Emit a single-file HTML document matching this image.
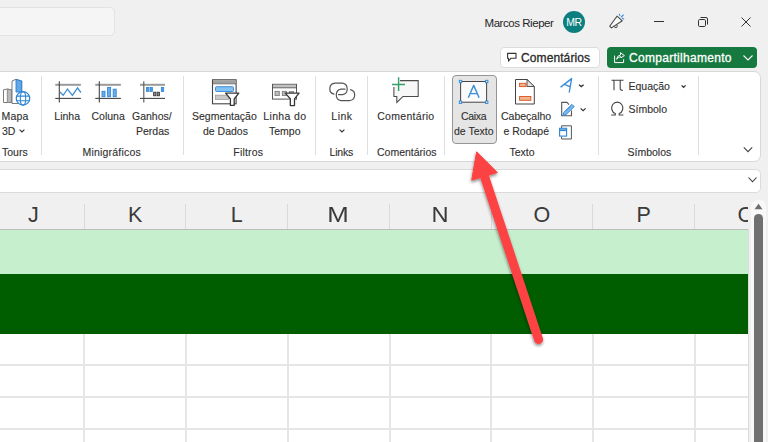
<!DOCTYPE html>
<html><head><meta charset="utf-8">
<style>
*{margin:0;padding:0;box-sizing:border-box}
html,body{width:768px;height:442px;overflow:hidden;background:#f0f0f0;font-family:"Liberation Sans",sans-serif;color:#262626;position:relative}
.a{position:absolute}
.t{position:absolute;white-space:nowrap}
.r{-webkit-text-stroke:0.12px currentColor}
svg{position:absolute;overflow:visible}
</style></head><body>
<div class="a" style="left:-10px;top:7px;width:125px;height:29px;background:#f5f5f5;border:1px solid #e3e3e3;border-radius:5px"></div>
<div class="t" style="left:484.50px;top:16.62px;font-size:11.5px;line-height:13.8px;color:#262626;letter-spacing:-0.45px">Marcos Rieper</div>
<div class="a" style="left:562.6px;top:10.75px;width:22px;height:22px;border-radius:50%;background:#0b7f80"></div>
<div class="t" style="left:558.90px;width:30px;text-align:center;top:15.66px;font-size:10.5px;line-height:12.6px;color:#ffffff;letter-spacing:-0.4px">MR</div>
<svg style="left:0;top:0" width="768" height="442" viewBox="0 0 768 442">
<path d="M617 16.2 L622.3 20.8 L611.4 27.9 L609.7 26.2 Z" fill="#fafafa" stroke="#454545" stroke-width="1.1" stroke-linejoin="round"/>
<path d="M613.6 25.9 Q614.5 28.3 616.8 27.4 Q617.4 26.4 617 25" fill="none" stroke="#454545" stroke-width="1"/>
<path d="M619.4 14.3 L619.9 15.6 M621.3 17 L623.3 15 M622.3 18.3 L623.8 18.9" stroke="#3b8fdb" stroke-width="1.1" stroke-linecap="round"/>
</svg>
<div class="a" style="left:654px;top:21px;width:10px;height:1px;background:#333"></div>
<svg style="left:697px;top:16px" width="12" height="12" viewBox="0 0 12 12">
<rect x="1.5" y="3.5" width="7" height="7" rx="1.2" fill="none" stroke="#333" stroke-width="1"/>
<path d="M3.5 1.5 H9 A1.5 1.5 0 0 1 10.5 3 V8.5" fill="none" stroke="#333" stroke-width="1"/>
</svg>
<svg style="left:741px;top:17px" width="10" height="10" viewBox="0 0 10 10">
<path d="M0.5 0.5 L9.5 9.5 M9.5 0.5 L0.5 9.5" stroke="#333" stroke-width="1"/>
</svg>
<div class="a" style="left:499.5px;top:46.5px;width:100px;height:21px;background:#fff;border:1px solid #dcdcdc;border-radius:4px"></div>
<svg style="left:0;top:0" width="768" height="442" viewBox="0 0 768 442">
<path d="M507.6 53.4 H516 V58.2 H511 L508.5 61.2 V58.2 H507.6 Z" fill="none" stroke="#333" stroke-width="1.1" stroke-linejoin="round"/>
</svg>
<div class="t" style="left:521.00px;top:50.84px;font-size:12px;line-height:14.4px;color:#2a2a2a;-webkit-text-stroke:0.3px #2a2a2a;letter-spacing:0.1px">Comentários</div>
<div class="a" style="left:607px;top:46.5px;width:150px;height:21.5px;background:#16793f;border-radius:4px"></div>
<svg style="left:0;top:0" width="768" height="442" viewBox="0 0 768 442">
<path d="M614.6 55.6 V62.6 H623.6 V59.2" fill="none" stroke="#fff" stroke-width="1"/>
<path d="M616.6 59.2 Q617.2 55.6 620.6 54.9 L620.4 52.6 L624.4 55.6 L621 57.8 L620.9 56.6 Q618.2 57 616.6 59.2 Z" fill="none" stroke="#fff" stroke-width="1" stroke-linejoin="round"/>
</svg>
<div class="t" style="left:629.00px;top:50.84px;font-size:12px;line-height:14.4px;color:#ffffff;-webkit-text-stroke:0.3px #ffffff;letter-spacing:0.3px">Compartilhamento</div>
<svg style="left:743px;top:55px" width="10" height="6" viewBox="0 0 10 6">
<path d="M0.5 0.5 L5 5 L9.5 0.5" fill="none" stroke="#fff" stroke-width="1.1"/>
</svg>
<div class="a" style="left:-12px;top:71px;width:772.5px;height:90.5px;background:#fff;border:1px solid #d8d8d8;border-radius:7px"></div>
<div class="a" style="left:41.0px;top:76px;width:1px;height:79px;background:#dedede"></div>
<div class="a" style="left:182.5px;top:76px;width:1px;height:79px;background:#dedede"></div>
<div class="a" style="left:314.5px;top:76px;width:1px;height:79px;background:#dedede"></div>
<div class="a" style="left:367.0px;top:76px;width:1px;height:79px;background:#dedede"></div>
<div class="a" style="left:443.5px;top:76px;width:1px;height:79px;background:#dedede"></div>
<div class="a" style="left:598.0px;top:76px;width:1px;height:79px;background:#dedede"></div>
<div class="a" style="left:698.0px;top:76px;width:1px;height:79px;background:#dedede"></div>
<div class="t r" style="left:1.50px;top:110.06px;font-size:10.5px;line-height:12.6px;color:#303030;letter-spacing:0.2px">Mapa</div>
<div class="t r" style="left:2.00px;top:124.76px;font-size:10.5px;line-height:12.6px;color:#303030;">3D</div>
<svg style="left:19px;top:129px" width="6" height="4" viewBox="0 0 6 4"><path d="M0.6 0.6 L3 2.9 L5.4 0.6" fill="none" stroke="#333" stroke-width="1.2"/></svg>
<div class="t r" style="left:2.00px;top:146.06px;font-size:10.5px;line-height:12.6px;color:#303030;">Tours</div>
<div class="t r" style="left:54.30px;top:110.06px;font-size:10.5px;line-height:12.6px;color:#303030;">Linha</div>
<div class="t r" style="left:91.50px;top:110.06px;font-size:10.5px;line-height:12.6px;color:#303030;">Coluna</div>
<div class="t r" style="left:132.00px;top:110.06px;font-size:10.5px;line-height:12.6px;color:#303030;">Ganhos/</div>
<div class="t r" style="left:136.00px;top:124.76px;font-size:10.5px;line-height:12.6px;color:#303030;">Perdas</div>
<div class="t r" style="left:82.50px;top:146.06px;font-size:10.5px;line-height:12.6px;color:#303030;letter-spacing:0.2px">Minigráficos</div>
<div class="t r" style="left:192.00px;top:110.06px;font-size:10.5px;line-height:12.6px;color:#303030;">Segmentação</div>
<div class="t r" style="left:203.00px;top:124.76px;font-size:10.5px;line-height:12.6px;color:#303030;">de Dados</div>
<div class="t r" style="left:263.30px;top:110.06px;font-size:10.5px;line-height:12.6px;color:#303030;letter-spacing:0.35px">Linha do</div>
<div class="t r" style="left:269.00px;top:124.76px;font-size:10.5px;line-height:12.6px;color:#303030;">Tempo</div>
<div class="t r" style="left:233.30px;top:146.06px;font-size:10.5px;line-height:12.6px;color:#303030;letter-spacing:0.2px">Filtros</div>
<div class="t r" style="left:331.30px;top:110.06px;font-size:10.5px;line-height:12.6px;color:#303030;letter-spacing:0.5px">Link</div>
<svg style="left:338.5px;top:129px" width="6" height="4" viewBox="0 0 6 4"><path d="M0.6 0.6 L3 2.9 L5.4 0.6" fill="none" stroke="#333" stroke-width="1.2"/></svg>
<div class="t r" style="left:329.50px;top:146.06px;font-size:10.5px;line-height:12.6px;color:#303030;letter-spacing:-0.2px">Links</div>
<div class="t r" style="left:377.20px;top:110.06px;font-size:10.5px;line-height:12.6px;color:#303030;letter-spacing:0.3px">Comentário</div>
<div class="t r" style="left:377.00px;top:146.06px;font-size:10.5px;line-height:12.6px;color:#303030;">Comentários</div>
<div class="a" style="left:451.5px;top:74.5px;width:45px;height:69px;background:#e5e5e5;border:1px solid #959595;border-radius:4px"></div>
<div class="t r" style="left:461.00px;top:110.06px;font-size:10.5px;line-height:12.6px;color:#303030;letter-spacing:-0.3px">Caixa</div>
<div class="t r" style="left:454.00px;top:124.76px;font-size:10.5px;line-height:12.6px;color:#303030;">de Texto</div>
<div class="t r" style="left:501.00px;top:110.06px;font-size:10.5px;line-height:12.6px;color:#303030;">Cabeçalho</div>
<div class="t r" style="left:503.50px;top:124.76px;font-size:10.5px;line-height:12.6px;color:#303030;">e Rodapé</div>
<div class="t r" style="left:509.50px;top:146.06px;font-size:10.5px;line-height:12.6px;color:#303030;">Texto</div>
<div class="t r" style="left:628.50px;top:79.76px;font-size:10.5px;line-height:12.6px;color:#303030;">Equação</div>
<div class="t r" style="left:628.50px;top:102.76px;font-size:10.5px;line-height:12.6px;color:#303030;">Símbolo</div>
<div class="t r" style="left:627.50px;top:146.06px;font-size:10.5px;line-height:12.6px;color:#303030;">Símbolos</div>
<div class="a" style="left:-12px;top:169px;width:773px;height:24px;background:#fff;border:1px solid #dbdbdb;border-radius:5px"></div>
<svg style="left:747.5px;top:176.5px" width="10" height="6" viewBox="0 0 10 6"><path d="M0.5 0.5 L4.5 4.8 L8.5 0.5" fill="none" stroke="#333" stroke-width="1.1"/></svg>
<div class="a" style="left:84px;top:204px;width:1px;height:25px;background:#dadada"></div>
<div class="a" style="left:185px;top:204px;width:1px;height:25px;background:#dadada"></div>
<div class="a" style="left:287px;top:204px;width:1px;height:25px;background:#dadada"></div>
<div class="a" style="left:389px;top:204px;width:1px;height:25px;background:#dadada"></div>
<div class="a" style="left:491px;top:204px;width:1px;height:25px;background:#dadada"></div>
<div class="a" style="left:592px;top:204px;width:1px;height:25px;background:#dadada"></div>
<div class="a" style="left:694px;top:204px;width:1px;height:25px;background:#dadada"></div>
<div class="a" style="left:0;top:229px;width:748px;height:1px;background:#bdbdbd"></div>
<div class="a" style="left:748px;top:229px;width:1px;height:213px;background:#dcdcdc"></div>
<div class="a" style="left:0;top:230px;width:748px;height:44px;background:#c6efce"></div>
<div class="a" style="left:0;top:274px;width:748px;height:60px;background:#005e00"></div>
<div class="a" style="left:0;top:334px;width:748px;height:108px;background:#fff"></div>
<div class="a" style="left:0;top:364px;width:748px;height:2px;background:#e6e6e6"></div>
<div class="a" style="left:0;top:396px;width:748px;height:2px;background:#e6e6e6"></div>
<div class="a" style="left:0;top:428px;width:748px;height:2px;background:#e6e6e6"></div>
<div class="a" style="left:83px;top:334px;width:2px;height:108px;background:#e6e6e6"></div>
<div class="a" style="left:185px;top:334px;width:2px;height:108px;background:#e6e6e6"></div>
<div class="a" style="left:287px;top:334px;width:2px;height:108px;background:#e6e6e6"></div>
<div class="a" style="left:389px;top:334px;width:2px;height:108px;background:#e6e6e6"></div>
<div class="a" style="left:490px;top:334px;width:2px;height:108px;background:#e6e6e6"></div>
<div class="a" style="left:592px;top:334px;width:2px;height:108px;background:#e6e6e6"></div>
<div class="a" style="left:694px;top:334px;width:2px;height:108px;background:#e6e6e6"></div>
<div class="a" style="left:0;top:195px;width:748px;height:34px;overflow:hidden">
<div class="t" style="left:13.35px;width:40px;text-align:center;top:8.25px;font-size:21.5px;line-height:25.8px;color:#3a3a3a;transform:scaleX(1.0)">J</div>
<div class="t" style="left:115.05px;width:40px;text-align:center;top:8.25px;font-size:21.5px;line-height:25.8px;color:#3a3a3a;transform:scaleX(1.0)">K</div>
<div class="t" style="left:216.75px;width:40px;text-align:center;top:8.25px;font-size:21.5px;line-height:25.8px;color:#3a3a3a;transform:scaleX(1.0)">L</div>
<div class="t" style="left:318.45px;width:40px;text-align:center;top:8.25px;font-size:21.5px;line-height:25.8px;color:#3a3a3a;transform:scaleX(1.2)">M</div>
<div class="t" style="left:420.15px;width:40px;text-align:center;top:8.25px;font-size:21.5px;line-height:25.8px;color:#3a3a3a;transform:scaleX(1.1)">N</div>
<div class="t" style="left:521.85px;width:40px;text-align:center;top:8.25px;font-size:21.5px;line-height:25.8px;color:#3a3a3a;transform:scaleX(1.0)">O</div>
<div class="t" style="left:623.55px;width:40px;text-align:center;top:8.25px;font-size:21.5px;line-height:25.8px;color:#3a3a3a;transform:scaleX(1.0)">P</div>
<div class="t" style="left:725.25px;width:40px;text-align:center;top:8.25px;font-size:21.5px;line-height:25.8px;color:#3a3a3a;transform:scaleX(1.0)">C</div>
</div>
<div class="a" style="left:750.8px;top:199.5px;width:15.4px;height:250px;background:#f8f8f8;border-radius:7px"></div>
<svg style="left:754px;top:203px" width="9" height="7" viewBox="0 0 9 7"><path d="M0.5 6.2 L4.5 0.8 L8.5 6.2 Z" fill="#6e6e6e"/></svg>
<div class="a" style="left:754.3px;top:214px;width:8.5px;height:240px;background:#707070;border-radius:4.25px"></div>
<svg style="left:0;top:0" width="768" height="442" viewBox="0 0 768 442">
<!-- Mapa 3D -->
<g stroke-linejoin="round">
<path d="M3.5 89.8 L7.3 89 L11.6 89.8 V102.5 H3.5 Z" fill="#fff" stroke="#7a7a7a" stroke-width="1"/>
<path d="M7.3 89.2 L11.6 89.8 V102.5 H7.3 Z" fill="#b9b9b9" stroke="#7a7a7a" stroke-width="0.8"/>
<path d="M12 81 L16 79.3 L21.7 81 V103.5 H12 Z" fill="#fff" stroke="#7a7a7a" stroke-width="1"/>
<path d="M16 79.5 L21.7 81 V92 H16 Z" fill="#62a8e6" stroke="#2a7fd2" stroke-width="0.9"/>
<circle cx="23" cy="98.4" r="6.7" fill="#fff" stroke="#2f86d6" stroke-width="1.3"/>
<ellipse cx="23" cy="98.4" rx="2.7" ry="6.7" fill="none" stroke="#2f86d6" stroke-width="1.1"/>
<path d="M16.7 96.1 H29.3 M16.7 100.7 H29.3" stroke="#2f86d6" stroke-width="1.1"/>
</g>
<!-- Linha -->
<path d="M55.3 84.8 H80.9" stroke="#9a9a9a" stroke-width="2"/>
<path d="M55.3 98.4 H80.9" stroke="#444" stroke-width="1.1"/>
<path d="M59.3 81.3 V102.6" stroke="#444" stroke-width="1.1"/>
<path d="M60 92 L63.2 95.3 L67.5 89 L72.4 95.3 L77.5 87.8 L80.9 92.5" fill="none" stroke="#3d8fd8" stroke-width="1.3" stroke-linejoin="miter"/>
<!-- Coluna -->
<path d="M95.3 84.8 H120.9" stroke="#9a9a9a" stroke-width="2"/>
<path d="M95.3 98.4 H120.9" stroke="#444" stroke-width="1.1"/>
<path d="M99.3 81.3 V102.6" stroke="#444" stroke-width="1.1"/>
<g fill="#6aaee8" stroke="#2f86d6" stroke-width="0.9">
<rect x="102" y="91.3" width="3" height="5.4"/>
<rect x="107.6" y="87.4" width="3" height="9.3"/>
<rect x="113.2" y="89.2" width="3" height="7.5"/>
</g>
<!-- Ganhos -->
<path d="M140 84.8 H165" stroke="#9a9a9a" stroke-width="2"/>
<path d="M140 98.4 H165" stroke="#444" stroke-width="1.1"/>
<path d="M143.8 81.2 V102.4" stroke="#555" stroke-width="1.1"/>
<g fill="#4c9be0" stroke="#2f86d6" stroke-width="0.8">
<rect x="146.4" y="87.4" width="2.4" height="4"/>
<rect x="150" y="87.4" width="2.4" height="4"/>
<rect x="161.3" y="87.4" width="2.4" height="4"/>
</g>
<g fill="#888" stroke="#333" stroke-width="0.8">
<rect x="153.6" y="92.2" width="2.4" height="3.6"/>
<rect x="157.2" y="92.2" width="2.4" height="3.6"/>
</g>
<!-- Segmentacao -->
<rect x="212.5" y="79.8" width="23.6" height="24" fill="#fff" stroke="#444" stroke-width="1.1"/>
<rect x="213" y="80.3" width="22.6" height="3.2" fill="#a0a0a0"/>
<path d="M212.5 83.8 H236.1" stroke="#555" stroke-width="0.8"/>
<rect x="215.5" y="86.7" width="18" height="4.8" rx="1" fill="#84c2f2" stroke="#2f86d6" stroke-width="0.9"/>
<rect x="215.5" y="95.2" width="13" height="4.2" fill="#c9c9c9" stroke="#9a9a9a" stroke-width="0.8"/>
<path d="M225.6 93.2 H238.8 L234.2 99 V105.4 H230.4 V99 Z" fill="#fff" stroke="#383838" stroke-width="1.3" stroke-linejoin="round"/>
<!-- Linha do tempo -->
<rect x="272.5" y="84.3" width="24" height="14.8" fill="#fff" stroke="#555" stroke-width="1"/>
<rect x="273" y="84.8" width="23" height="2.8" fill="#c2c2c2"/>
<path d="M272.5 87.8 H296.5" stroke="#555" stroke-width="0.9"/>
<rect x="275" y="91.3" width="4.3" height="4.3" fill="#bdbdbd" stroke="#777" stroke-width="0.8"/>
<rect x="282.3" y="91.3" width="4.3" height="4.3" fill="#bdbdbd" stroke="#777" stroke-width="0.8"/>
<rect x="289.2" y="91.3" width="4.5" height="1.6" fill="#bdbdbd" stroke="#777" stroke-width="0.6"/>
<path d="M285.2 93.1 H299.1 L294.5 98.8 V105.6 H290.3 V98.8 Z" fill="#fff" stroke="#383838" stroke-width="1.3" stroke-linejoin="round"/>
<!-- Link -->
<g fill="none" stroke="#555" stroke-width="1.2" stroke-linecap="round">
<path d="M334 94.2 A5.6 5.6 0 0 1 335 83.2 H342.5 A5.8 5.8 0 0 1 342.5 94.6 H338.5"/>
<path d="M350.5 89.6 A5.6 5.6 0 0 1 349.5 100.6 H341 A5.8 5.8 0 0 1 341 89.2 H345"/>
</g>
<!-- Comentario -->
<path d="M400.5 80.6 H418.2 V96.4 H403 L396.8 102.4 V96.4 H393.9 V87.5" fill="#f7f7f7" stroke="#4a4a4a" stroke-width="1.05" stroke-linejoin="miter" stroke-linecap="square"/>
<path d="M392 84.5 H405 M398.6 77.3 V91" stroke="#34a06a" stroke-width="1.4"/>
<!-- Caixa de texto -->
<rect x="460.6" y="81.5" width="26" height="20.7" fill="#fafafa" stroke="#444" stroke-width="1"/>
<g fill="#cfe4f7" stroke="#2f86d6" stroke-width="0.9">
<rect x="459.3" y="80.3" width="2.4" height="2.4"/>
<rect x="485.5" y="80.3" width="2.4" height="2.4"/>
<rect x="459.3" y="101" width="2.4" height="2.4"/>
<rect x="485.5" y="101" width="2.4" height="2.4"/>
</g>
<path d="M468.3 97.8 L473.7 85.4 L479.1 97.8 M470.1 93.6 H477.3" fill="none" stroke="#3d8fd8" stroke-width="1.45" stroke-linejoin="round"/>
<!-- Cabecalho -->
<path d="M515.5 79.5 H527 L534.3 86.5 V104 H515.5 Z" fill="#fff" stroke="#444" stroke-width="1" stroke-linejoin="round"/>
<path d="M527 79.5 V86.5 H534.3 Z" fill="#e4e4e4" stroke="#444" stroke-width="0.9" stroke-linejoin="round"/>
<rect x="519.6" y="83.3" width="6.4" height="3.3" fill="#f2b48c" stroke="#d6541f" stroke-width="0.9"/>
<rect x="519.6" y="96.5" width="11.3" height="3.8" fill="#f2b48c" stroke="#d6541f" stroke-width="0.9"/>
<!-- WordArt -->
<path d="M561 86.9 L571.6 78.6 L569.3 92 M564.4 84.4 L570 86.6" fill="none" stroke="#3a8fdc" stroke-width="1.4" stroke-linecap="round" stroke-linejoin="round"/>
<path d="M579 84.8 L581.3 86.6 L583.6 84.8" fill="none" stroke="#333" stroke-width="1.25"/>
<!-- Signature -->
<path d="M569 104.6 L567 102.4 H561.7 V115.8 H571.5 V110.5" fill="none" stroke="#555" stroke-width="1.1" stroke-linejoin="round"/>
<path d="M572 104.4 L574.2 106.6 L566 114.6 L562.8 115.6 L563.8 112.4 Z" fill="#7cb9ee" stroke="#2f86d6" stroke-width="1" stroke-linejoin="round"/>
<path d="M570.6 106.2 L566 110.8" stroke="#2f86d6" stroke-width="0.8"/>
<path d="M580.6 108.4 L583.1 110.6 L585.6 108.4" fill="none" stroke="#333" stroke-width="1.25"/>
<!-- Object -->
<path d="M563 125.8 H571.4 V139 H561.6 V136.6 M561.6 128 V125.8 H563" fill="none" stroke="#555" stroke-width="1"/>
<rect x="559.6" y="128.3" width="7" height="7.8" fill="#fff" stroke="#2f86d6" stroke-width="1.1"/>
<path d="M559.6 130.2 H566.6" stroke="#2f86d6" stroke-width="1.8"/>
<!-- Pi -->
<path d="M611.5 80.3 H623.5 M614 80.3 V90.2 M620.2 80.3 V88.5 Q620.2 90.4 622.8 90.4" fill="none" stroke="#444" stroke-width="1.1"/>
<path d="M681.6 85.4 L683.6 87.3 L685.6 85.4" fill="none" stroke="#333" stroke-width="1.25"/>
<!-- Omega -->
<path d="M611.2 115 H615.3 V113.6 A5.6 5.9 0 1 1 619.2 113.6 V115 H623.4" fill="none" stroke="#444" stroke-width="1.1"/>
<!-- expand -->
<path d="M743.8 147.3 L748 151.6 L752.2 147.3" fill="none" stroke="#444" stroke-width="1.1"/>
</svg>
<svg style="left:0;top:0" width="768" height="442" viewBox="0 0 768 442">
<defs><filter id="sh" x="-20%" y="-20%" width="140%" height="140%"><feDropShadow dx="-0.3" dy="1.8" stdDeviation="1.7" flood-color="#000" flood-opacity="0.45"/></filter></defs>
<g filter="url(#sh)">
<path d="M538.6 339.6 L484.5 176.4" stroke="#fc4242" stroke-width="9" stroke-linecap="round"/>
<path d="M476.6 151.8 L497.4 172.6 L471.7 180.2 Z" fill="#fc4242" stroke="#fc4242" stroke-width="1" stroke-linejoin="round"/>
</g>
</svg>
</body></html>
